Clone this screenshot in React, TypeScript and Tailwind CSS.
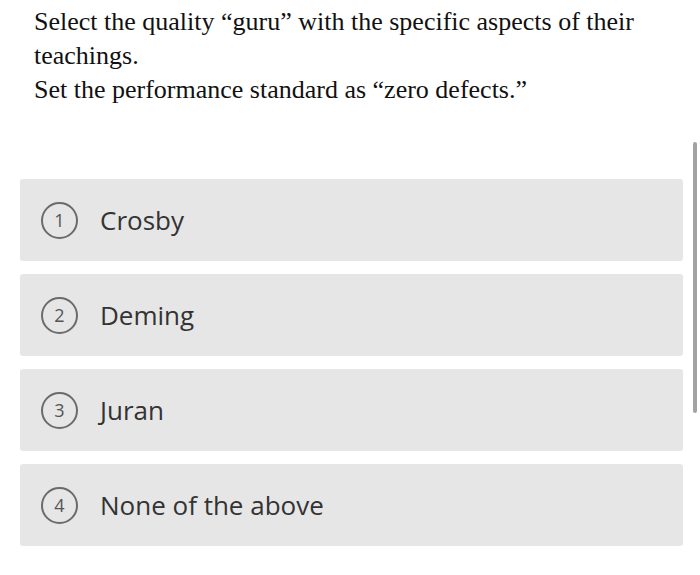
import React from "react";

const options = ["Crosby", "Deming", "Juran", "None of the above"];

export default function App() {
  return (
    <div className="relative w-[700px] h-[575px] bg-white overflow-hidden">
      <div
        className="pl-[34px] pr-[40px] pt-[5px] text-[26px] leading-[34px] text-[#111]"
        style={{ fontFamily: '"Liberation Serif", "Times New Roman", serif' }}
      >
        <p>Select the quality “guru” with the specific aspects of their teachings.</p>
        <p>Set the performance standard as “zero defects.”</p>
      </div>
      <div
        className="mt-[72px] ml-[20px] w-[663px] flex flex-col gap-[13px]"
        style={{ fontFamily: '"Open Sans", sans-serif' }}
      >
        {options.map((o, i) => (
          <div
            key={o}
            className="h-[82px] bg-[#e6e6e6] rounded-[3px] flex items-center pl-[21px]"
          >
            <div className="w-[37px] h-[37px] rounded-full border-2 border-[#6b6b6b] flex items-center justify-center text-[18px] text-[#555]">
              {i + 1}
            </div>
            <span className="ml-[22px] text-[26px] text-[#333]">{o}</span>
          </div>
        ))}
      </div>
      <div className="absolute left-[693px] top-[142px] w-[4px] h-[271px] rounded-full bg-[#a3a3a3]" />
    </div>
  );
}
